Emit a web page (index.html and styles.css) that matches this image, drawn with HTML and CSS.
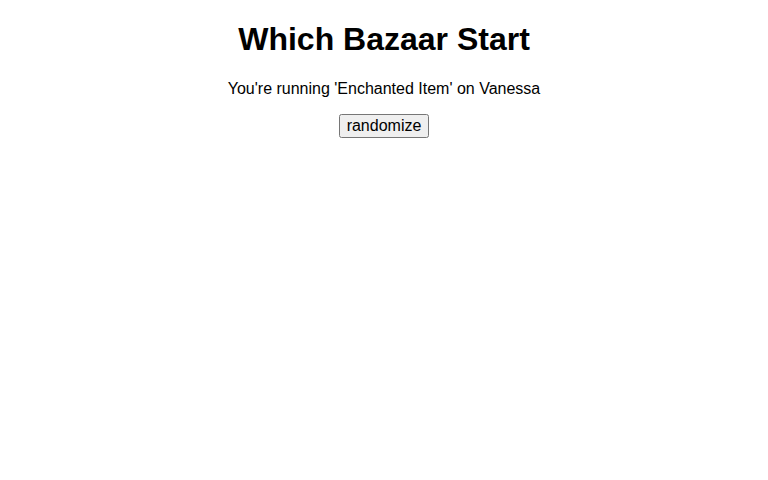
FILE: index.html
```html
<!DOCTYPE html>
<html>
<head>
  <meta charset="utf-8">
  <title>Which Bazaar Start</title>
  <link rel="stylesheet" href="styles.css">
</head>
<body>
  <div class="app">
    <h1>Which Bazaar Start</h1>
    <p id="result">You're running 'Enchanted Item' on Vanessa</p>
    <p><button id="randomize">randomize</button></p>
  </div>
</body>
</html>
```

FILE: styles.css
```css
body {
  margin: 0;
  font-family: "Liberation Sans", Arial, sans-serif;
}

.app {
  text-align: center;
}

button {
  font-family: inherit;
  font-size: 16px;
}
```
